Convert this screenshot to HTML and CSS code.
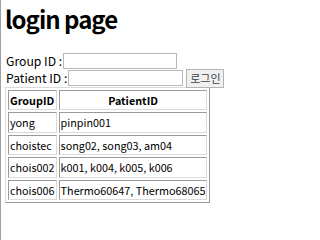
FILE: index.html
```html
<!DOCTYPE html>
<html>
<head>
<meta charset="utf-8">
<link rel="stylesheet" href="styles.css">
</head>
<body>
<h1 class="title">login page</h1>
<div class="row row-first">
  <span class="label">Group ID :</span>
  <input class="field field-group" type="text">
</div>
<div class="row row-second">
  <span class="label">Patient ID :</span>
  <input class="field field-patient" type="text">
  <button class="btn">로그인</button>
</div>
<table class="grid">
  <tr><th>GroupID</th><th class="center">PatientID</th></tr>
  <tr><td>yong</td><td>pinpin001</td></tr>
  <tr><td>choistec</td><td>song02, song03, am04</td></tr>
  <tr><td>chois002</td><td>k001, k004, k005, k006</td></tr>
  <tr><td>chois006</td><td>Thermo60647, Thermo68065</td></tr>
</table>
</body>
</html>
```
FILE: styles.css
```css
html {
  margin: 0;
  padding: 0;
  background: #fff;
  border-left: 1px solid #a0a0a0;
  min-height: 100%;
  box-sizing: border-box;
}
body {
  margin: 0 0 0 4px;
  padding: 0;
  font-family: "Noto Sans CJK KR", "Noto Sans", sans-serif;
  font-size: 13px;
  color: #000;
}
.title {
  margin: 0;
  padding-top: 4px;
  height: 48px;
  font-size: 24px;
  letter-spacing: -1px;
  line-height: 30px;
  font-weight: bold;
}
.row {
  display: flex;
  align-items: center;
  gap: 1px;
  padding-left: 1px;
}
.row-first { height: 17px; }
.row-second { height: 18px; }
.label {
  font-size: 12.2px;
  line-height: 16px;
}
.field {
  box-sizing: border-box;
  height: 16px;
  border: 1px solid #b8b8b8;
  padding: 0;
  margin: 0;
  background: #fff;
}
.field-group { width: 114px; }
.field-patient { width: 115px; }
.btn {
  box-sizing: border-box;
  height: 19px;
  width: 38px;
  margin: 0 0 0 2px;
  padding: 0;
  border: 1px solid #b4b4b4;
  background: #f0f0f0;
  font-family: "Noto Sans CJK KR", sans-serif;
  font-size: 11px;
  color: #444;
}
.grid {
  border-collapse: separate;
  border-spacing: 2px;
  border: 1px solid;
  border-color: #dadada #9a9a9a #9a9a9a #dadada;
  font-size: 10.8px;
}
.grid th, .grid td {
  border: 1px solid;
  border-color: #9a9a9a #dadada #dadada #9a9a9a;
  padding: 1px;
  line-height: 16.4px;
  text-align: left;
  white-space: nowrap;
}
.grid th { font-weight: bold; }
.grid th.center { text-align: center; }
```
